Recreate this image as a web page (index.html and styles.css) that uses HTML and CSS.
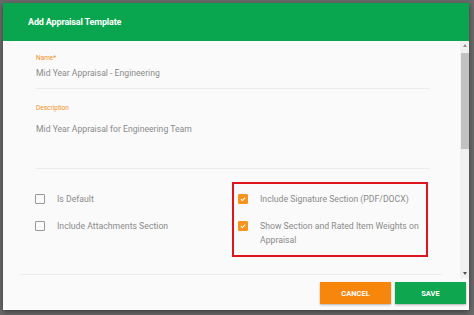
FILE: index.html
```html
<!DOCTYPE html>
<html>
<head>
<meta charset="utf-8">
<link rel="stylesheet" href="styles.css">
</head>
<body>
<div class="dialog">
  <div class="header">Add Appraisal Template</div>
  <div class="main">
    <div class="content">
      <div class="field name-field">
        <div class="label">Name*</div>
        <div class="value">Mid Year Appraisal - Engineering</div>
      </div>
      <div class="field desc-field">
        <div class="label">Description</div>
        <div class="value">Mid Year Appraisal for Engineering Team</div>
      </div>
      <div class="checks">
        <div class="col">
          <div class="check"><span class="box"></span><span class="text">Is Default</span></div>
          <div class="check"><span class="box"></span><span class="text">Include Attachments Section</span></div>
        </div>
        <div class="col highlight">
          <div class="check"><span class="box on"><svg viewBox="0 0 10 10"><path d="M2.3 5.2 L4.2 7 L7.8 3.2" fill="none" stroke="#fff" stroke-width="1.3"/></svg></span><span class="text">Include Signature Section (PDF/DOCX)</span></div>
          <div class="check"><span class="box on"><svg viewBox="0 0 10 10"><path d="M2.3 5.2 L4.2 7 L7.8 3.2" fill="none" stroke="#fff" stroke-width="1.3"/></svg></span><span class="text">Show Section and Rated Item Weights on Appraisal</span></div>
        </div>
      </div>
      <div class="rule"></div>
    </div>
    <div class="scrollbar">
      <div class="arrow up"></div>
      <div class="track"><div class="thumb"></div></div>
      <div class="arrow down"></div>
    </div>
  </div>
  <div class="footer">
    <button class="btn cancel">CANCEL</button>
    <button class="btn save">SAVE</button>
  </div>
</div>
</body>
</html>
```
FILE: styles.css
```css
html, body {
  margin: 0;
  padding: 0;
  background: #6b6b6b;
  font-family: Roboto, "Liberation Sans", sans-serif;
}
body {
  width: 474px;
  height: 315px;
  overflow: hidden;
}
.dialog {
  margin: 3px 0 0 3px;
  width: 466px;
  height: 307px;
  background: #fafafa;
  box-shadow: 0 2px 6px rgba(0,0,0,0.45);
  display: flex;
  flex-direction: column;
}
.header {
  height: 38px;
  flex: none;
  background: #0aa64f;
  color: #fff;
  font-weight: 700;
  font-size: 9px;
  letter-spacing: -0.15px;
  line-height: 38px;
  padding-left: 25px;
  box-sizing: border-box;
}
.main {
  height: 237px;
  flex: none;
  display: flex;
  overflow: hidden;
}
.content {
  flex: 1;
  padding: 13px 30px 0 33px;
  box-sizing: border-box;
}
.field {
  border-bottom: 1px solid #ececec;
}
.label {
  font-size: 6.5px;
  line-height: 8px;
  color: #f3901e;
}
.value {
  font-size: 8.65px;
  line-height: 12px;
  color: #8b8b8b;
}
.name-field .value { margin-top: 5px; padding-bottom: 9px; }
.desc-field { margin-top: 15px; }
.desc-field .value { margin-top: 11px; padding-bottom: 33px; }
.checks {
  display: grid;
  grid-template-columns: 199px 1fr;
  padding-top: 23px;
}
.col {
  display: flex;
  flex-direction: column;
  gap: 12px;
}
.col:first-child { margin-left: -1px; }
.highlight {
  margin-left: -3px;
  margin-top: -10px;
  padding: 8px 0 5px 4px;
  border: 2px solid #e0141c;
  height: 75px;
  box-sizing: border-box;
  width: 196px;
}
.check {
  display: flex;
  align-items: flex-start;
  gap: 12px;
}
.box {
  flex: none;
  width: 10px;
  height: 10px;
  box-sizing: border-box;
  border: 1px solid #9a9a9a;
  border-radius: 1px;
  margin-top: 2px;
}
.box.on {
  background: #f7931e;
  border-color: #f7931e;
  display: flex;
}
.box svg { width: 8px; height: 8px; }
.text {
  font-size: 8.7px;
  line-height: 14.5px;
  color: #8b8b8b;
}
.rule {
  margin: 17px -12px 0 -16px;
  border-top: 1px solid #ededed;
}
.scrollbar {
  width: 9px;
  flex: none;
  background: #f1f1f1;
  display: flex;
  flex-direction: column;
  align-items: center;
}
.arrow {
  width: 0;
  height: 0;
  border-left: 2.5px solid transparent;
  border-right: 2.5px solid transparent;
  margin: 3px 0;
}
.arrow.up { border-bottom: 3px solid #8e8e8e; }
.arrow.down { border-top: 3px solid #505050; }
.track {
  flex: 1;
  width: 100%;
  display: flex;
  justify-content: center;
}
.thumb {
  margin-top: 3px;
  width: 8px;
  height: 96px;
  background: #c1c1c1;
}
.footer {
  flex: 1;
  display: flex;
  justify-content: flex-end;
  align-items: flex-start;
  gap: 4px;
  padding: 4px 3px 0 0;
}
.btn {
  border: none;
  width: 71px;
  height: 22px;
  color: #fff;
  font-family: Roboto, "Liberation Sans", sans-serif;
  font-weight: 700;
  font-size: 7.5px;
  padding: 0;
  box-shadow: 0 1px 2px rgba(0,0,0,0.3);
}
.cancel { background: #f7860d; }
.save { background: #0ea64f; }
```
